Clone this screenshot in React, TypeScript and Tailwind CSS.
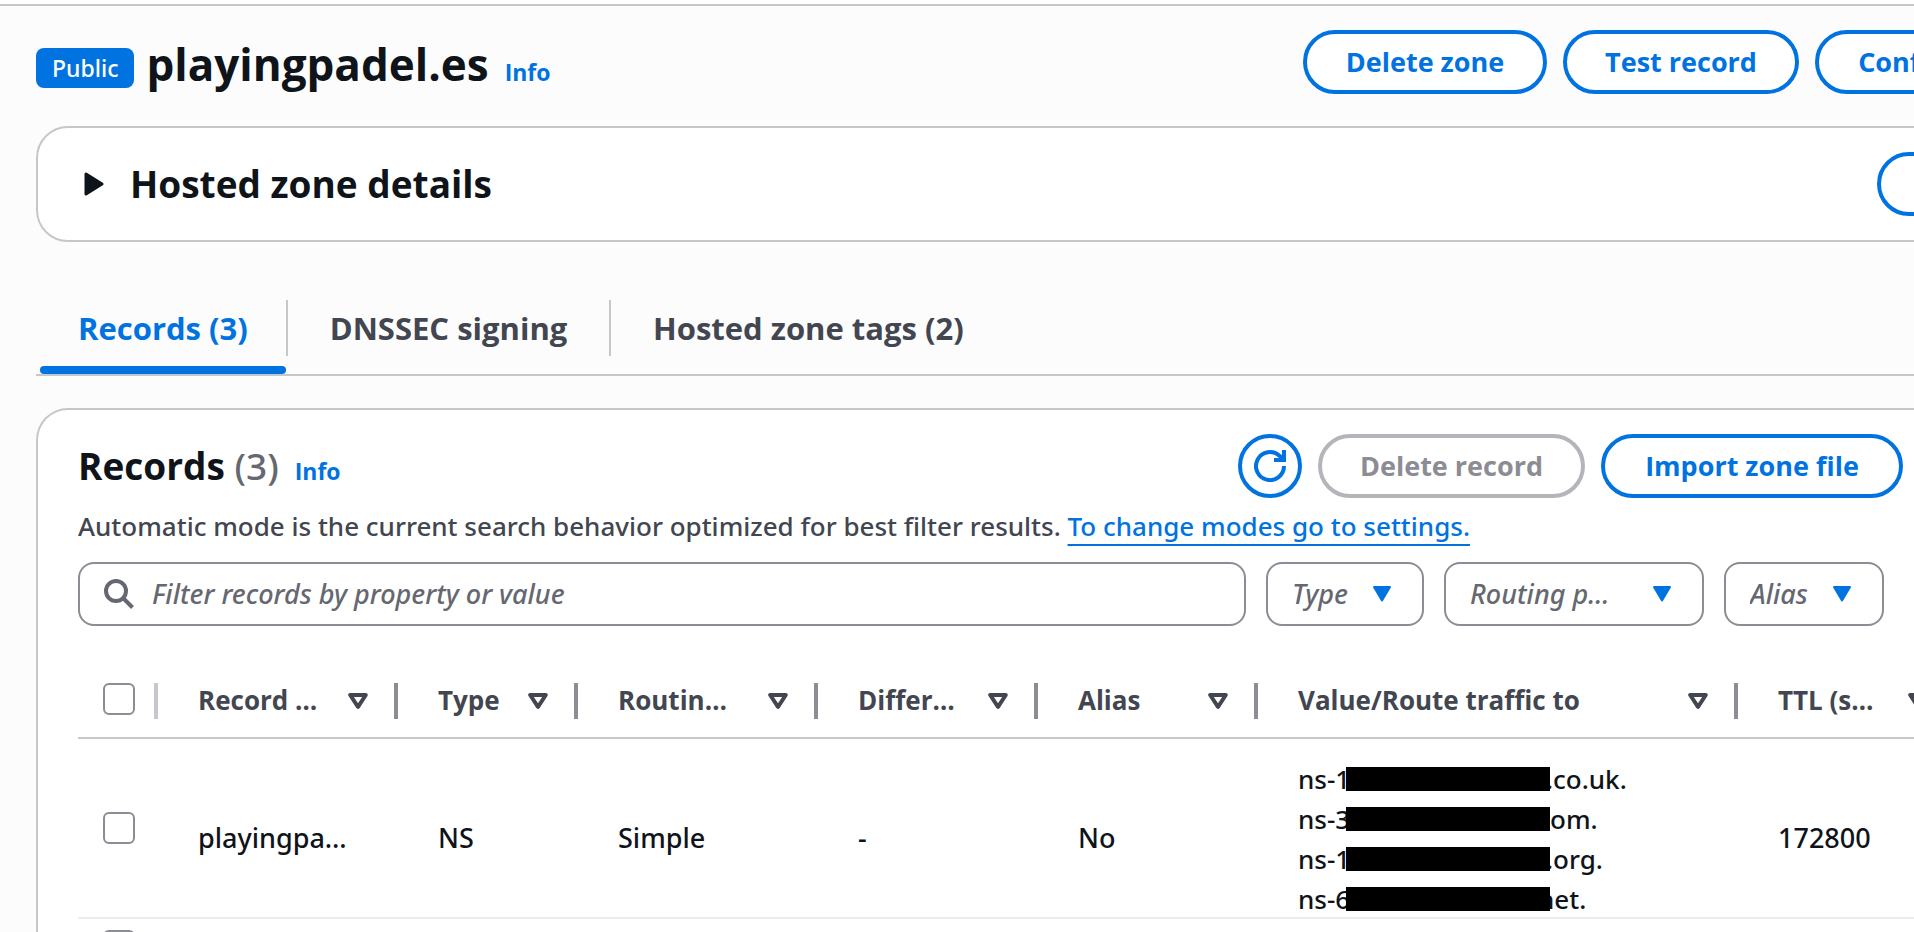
import React from "react";

const columns = [
  { label: "Record …", width: "w-[240px]" },
  { label: "Type", width: "w-[180px]" },
  { label: "Routin…", width: "w-[240px]" },
  { label: "Differ…", width: "w-[220px]" },
  { label: "Alias", width: "w-[220px]" },
  { label: "Value/Route traffic to", width: "w-[480px]" },
  { label: "TTL (s…", width: "w-[220px]" },
];

const nameServers = [
  { start: "ns-1", end: ".co.uk.", overlap: "-ml-1" },
  { start: "ns-3", end: "om.", overlap: "ml-0" },
  { start: "ns-1", end: ".org.", overlap: "-ml-1" },
  { start: "ns-6", end: "net.", overlap: "-ml-3" },
];

function PillButton({ children, className = "", disabled = false }: { children?: React.ReactNode; className?: string; disabled?: boolean }) {
  const tone = disabled ? "border-[#b4b4bb] text-[#8c8c94]" : "border-[#0073e0] text-[#0073e0]";
  return (
    <button
      type="button"
      disabled={disabled}
      className={`flex h-16 shrink-0 items-center justify-center rounded-full border-4 bg-white font-['Open_Sans',sans-serif] text-[27px] font-bold whitespace-nowrap ${tone} ${className}`}
    >
      {children}
    </button>
  );
}

function InfoLink() {
  return (
    <a href="#info" className="font-['Open_Sans',sans-serif] text-[23px] leading-[30px] font-bold text-[#0073e0]">
      Info
    </a>
  );
}

function SortIcon() {
  return (
    <svg viewBox="0 0 20 16" className="h-4 w-5 shrink-0" fill="none" stroke="#424650" strokeWidth="4" strokeLinejoin="round" aria-hidden="true">
      <path d="M2.2 2h15.6L10 13.8z" />
    </svg>
  );
}

function FilterSelect({ label, className }: { label: string; className: string }) {
  return (
    <div className={`relative shrink-0 ${className}`}>
      <select
        aria-label={label}
        className="h-16 w-full appearance-none rounded-2xl border-2 border-[#8c8c94] bg-white pl-6 text-[27px] font-medium text-[#656871] italic"
      >
        <option>{label}</option>
      </select>
      <svg viewBox="0 0 20 16" className="pointer-events-none absolute top-6 right-8 h-4 w-5" aria-hidden="true">
        <path d="M2 1h16L10 14.5z" fill="#0073e0" stroke="#0073e0" strokeWidth="2" strokeLinejoin="round" />
      </svg>
    </div>
  );
}

function Checkbox({ label }: { label: string }) {
  return (
    <input
      type="checkbox"
      aria-label={label}
      className="block size-8 appearance-none rounded-md border-2 border-[#8c8c94] bg-white checked:bg-[#0073e0]"
    />
  );
}

export default function App() {
  return (
    <div className="h-screen overflow-hidden bg-[#fcfcfd] font-['Noto_Sans','Open_Sans',sans-serif] font-medium text-[#0f141a]">
      <div className="h-1.5 border-b-2 border-[#c6c6cd] bg-white" />
      <main className="w-[calc(100%+332px)] px-9 pt-6">
        <header className="flex items-start justify-between">
          <div className="flex items-end gap-3 pt-2.5">
            <span className="flex h-10 items-center rounded-lg bg-[#0073e0] px-4 text-[23px] text-white">Public</span>
            <div className="flex items-baseline gap-4">
              <h1 className="font-['Open_Sans',sans-serif] text-[44px] leading-[48px] font-bold">playingpadel.es</h1>
              <InfoLink />
            </div>
          </div>
          <div className="flex gap-4">
            <PillButton className="w-[244px]">Delete zone</PillButton>
            <PillButton className="w-[236px]">Test record</PillButton>
            <PillButton className="w-[395px] pl-3">Configure query logging</PillButton>
          </div>
        </header>

        <section className="mt-8 flex h-[116px] items-center justify-between rounded-[32px] border-2 border-[#c6c6cd] bg-white pr-9 pl-[46px]">
          <button type="button" aria-expanded="false" className="flex items-center gap-[26px]">
            <svg viewBox="0 0 20 24" className="h-6 w-5" aria-hidden="true">
              <path d="M2 2v20l16-10z" fill="#0f141a" stroke="#0f141a" strokeWidth="3" strokeLinejoin="round" />
            </svg>
            <h2 className="font-['Open_Sans',sans-serif] text-[37px] leading-[48px] font-bold">Hosted zone details</h2>
          </button>
          <PillButton className="w-[295px]">Edit hosted zone</PillButton>
        </section>

        <nav className="mt-[58px] flex border-b-2 border-[#c6c6cd] font-['Open_Sans',sans-serif] text-[31px] font-bold text-[#424650]" role="tablist">
          <button type="button" role="tab" aria-selected="true" className="ml-1 flex flex-col text-[#0073e0]">
            <span className="flex h-14 w-[248px] items-center border-r-2 border-[#c6c6cd] pl-[38px]">Records (3)</span>
            <span className="mt-2.5 h-2 w-[246px] rounded bg-[#0073e0]" />
          </button>
          <button type="button" role="tab" aria-selected="false" className="flex h-14 w-[323px] items-center justify-center border-r-2 border-[#c6c6cd]">
            DNSSEC signing
          </button>
          <button type="button" role="tab" aria-selected="false" className="flex h-14 items-center pl-[42px]">
            Hosted zone tags (2)
          </button>
        </nav>

        <section className="mt-8 rounded-t-[32px] border-2 border-b-0 border-[#c6c6cd] bg-white px-10 pt-6">
          <div className="flex items-start">
            <div className="flex h-16 w-[1160px] items-center">
              <div className="flex items-baseline gap-4">
                <h2 className="font-['Open_Sans',sans-serif] text-[37px] leading-[48px] font-bold">
                  Records <span className="font-['Noto_Sans',sans-serif] font-medium text-[#656871]">(3)</span>
                </h2>
                <InfoLink />
              </div>
            </div>
            <div className="flex gap-4">
              <PillButton className="w-16">
                <svg viewBox="0 0 32 32" className="size-8" fill="none" stroke="#0073e0" strokeWidth="4" role="img" aria-label="Refresh">
                  <path d="M30 16a14 14 0 1 1-4.5-10.200L30 10" />
                  <path d="M30 0v10H20" />
                </svg>
              </PillButton>
              <PillButton className="w-[267px]" disabled>
                Delete record
              </PillButton>
              <PillButton className="w-[302px]">Import zone file</PillButton>
            </div>
          </div>
          <p className="mt-2 text-[26px] leading-10 text-[#424650]">
            Automatic mode is the current search behavior optimized for best filter results.{" "}
            <a href="#settings" className="text-[#0073e0] underline decoration-2 underline-offset-8">
              To change modes go to settings.
            </a>
          </p>

          <div className="mt-4 flex gap-5">
            <label className="flex h-16 w-[1168px] items-center gap-[18px] rounded-2xl border-2 border-[#8c8c94] bg-white px-6">
              <svg viewBox="0 0 30 30" className="size-[30px] shrink-0" fill="none" stroke="#656871" strokeWidth="4" aria-hidden="true">
                <circle cx="12" cy="12" r="10" />
                <path d="m19 19 9.500 9.500" />
              </svg>
              <input
                type="text"
                aria-label="Filter records"
                placeholder="Filter records by property or value"
                className="w-full bg-transparent text-[27px] font-medium outline-none placeholder:text-[#656871] placeholder:italic"
              />
            </label>
            <FilterSelect label="Type" className="w-[158px]" />
            <FilterSelect label="Routing p…" className="w-[260px]" />
            <FilterSelect label="Alias" className="w-[160px]" />
          </div>

          <table className="mt-[38px] w-[1880px] table-fixed border-collapse text-left text-[27px]">
            <thead className="font-['Open_Sans',sans-serif] text-[26px] text-[#424650]">
              <tr className="h-[74px] border-b-2 border-[#c6c6cd]">
                <th className="w-20 p-0">
                  <div className="flex h-9 items-start justify-between pl-[25px]">
                    <Checkbox label="Select all records" />
                    <span className="h-9 w-1 bg-[#c6c6cd]" />
                  </div>
                </th>
                {columns.map((column) => (
                  <th key={column.label} className={`p-0 ${column.width}`}>
                    <div className="flex h-9 items-center border-r-4 border-[#8c8c94] pr-[26px] pl-10">
                      <span className="flex-1 whitespace-nowrap">{column.label}</span>
                      <SortIcon />
                    </div>
                  </th>
                ))}
              </tr>
            </thead>
            <tbody>
              <tr className="h-[180px] border-b-2 border-[#ebebf0]">
                <td className="p-0 pl-[25px]">
                  <Checkbox label="Select playingpadel.es NS" />
                </td>
                <td className="pt-5 pl-10">playingpa…</td>
                <td className="pt-5 pl-10">NS</td>
                <td className="pt-5 pl-10">Simple</td>
                <td className="pt-5 pl-10">-</td>
                <td className="pt-5 pl-10">No</td>
                <td className="p-0 pt-5 pl-10">
                  <ul className="h-[158px] text-[26px]">
                    {nameServers.map((server) => (
                      <li key={server.start + server.end} className="flex h-10 items-center">
                        <span className="w-12 whitespace-nowrap">{server.start}</span>
                        <span className="relative z-10 h-6 w-[204px] bg-black" />
                        <span className={server.overlap}>{server.end}</span>
                      </li>
                    ))}
                  </ul>
                </td>
                <td className="pt-5 pl-10">172800</td>
              </tr>
              <tr className="h-[100px]">
                <td className="p-0 pt-[11px] pl-[25px] align-top">
                  <Checkbox label="Select playingpadel.es SOA" />
                </td>
              </tr>
            </tbody>
          </table>
        </section>
      </main>
    </div>
  );
}
